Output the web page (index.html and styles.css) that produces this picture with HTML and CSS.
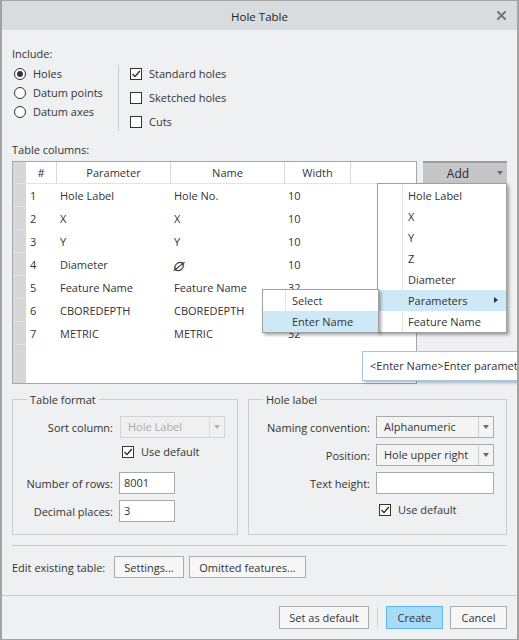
FILE: index.html
```html
<!DOCTYPE html>
<html>
<head>
<meta charset="utf-8">
<title>Hole Table</title>
<link rel="stylesheet" href="styles.css">
</head>
<body>
<div class="window">
  <div class="titlebar">
    <span class="title">Hole Table</span>
    <svg class="close" width="9" height="9" viewBox="0 0 9 9"><path d="M1 1L8 8M8 1L1 8" stroke="#767676" stroke-width="2" stroke-linecap="square"/></svg>
  </div>
  <div class="content">
    <div class="section-label include-label">Include:</div>
    <div class="include">
      <div class="radios">
        <div class="opt radio-row"><span class="radio checked"></span>Holes</div>
        <div class="opt radio-row"><span class="radio"></span>Datum points</div>
        <div class="opt radio-row"><span class="radio"></span>Datum axes</div>
      </div>
      <div class="vsep"></div>
      <div class="checks">
        <div class="opt check-row"><span class="check"><svg width="10" height="10" viewBox="0 0 10 10"><path d="M1.5 5L4 7.6L8.8 2" fill="none" stroke="#222" stroke-width="1.3"/></svg></span>Standard holes</div>
        <div class="opt check-row"><span class="check"></span>Sketched holes</div>
        <div class="opt check-row"><span class="check"></span>Cuts</div>
      </div>
    </div>
    <div class="section-label cols-label">Table columns:</div>
    <div class="table-area">
      <div class="table">
        <div class="trow thead">
          <div class="gutter"></div><div class="cell hc">#</div><div class="cell hc">Parameter</div><div class="cell hc">Name</div><div class="cell hc">Width</div><div class="cell hc last"></div>
        </div>
        <div class="trow"><div class="gutter"></div><div class="cell num">1</div><div class="cell">Hole Label</div><div class="cell">Hole No.</div><div class="cell">10</div><div class="cell"></div></div>
        <div class="trow"><div class="gutter"></div><div class="cell num">2</div><div class="cell">X</div><div class="cell">X</div><div class="cell">10</div><div class="cell"></div></div>
        <div class="trow"><div class="gutter"></div><div class="cell num">3</div><div class="cell">Y</div><div class="cell">Y</div><div class="cell">10</div><div class="cell"></div></div>
        <div class="trow"><div class="gutter"></div><div class="cell num">4</div><div class="cell">Diameter</div><div class="cell"><span class="dia">⌀</span></div><div class="cell">10</div><div class="cell"></div></div>
        <div class="trow"><div class="gutter"></div><div class="cell num">5</div><div class="cell">Feature Name</div><div class="cell">Feature Name</div><div class="cell">32</div><div class="cell"></div></div>
        <div class="trow"><div class="gutter"></div><div class="cell num">6</div><div class="cell">CBOREDEPTH</div><div class="cell">CBOREDEPTH</div><div class="cell">32</div><div class="cell"></div></div>
        <div class="trow"><div class="gutter"></div><div class="cell num">7</div><div class="cell">METRIC</div><div class="cell">METRIC</div><div class="cell">32</div><div class="cell"></div></div>
        <div class="filler"><div class="gutter"></div></div>
      </div>
      <div class="add-btn"><span class="add-text">Add</span><span class="add-caret"><span class="caret"></span></span></div>

      <div class="menu main-menu">
        <div class="mi">Hole Label</div>
        <div class="mi">X</div>
        <div class="mi">Y</div>
        <div class="mi">Z</div>
        <div class="mi">Diameter</div>
        <div class="mi hl">Parameters<span class="sub-arrow"></span></div>
        <div class="mi">Feature Name</div>
      </div>
      <div class="menu sub-menu">
        <div class="mi">Select</div>
        <div class="mi hl">Enter Name</div>
      </div>
      <div class="tooltip">&lt;Enter Name&gt;Enter parameter name</div>
    </div>

    <div class="groups">
      <div class="group tf">
        <div class="group-title">Table format</div>
        <div class="frow h22">
          <span class="flabel">Sort column:</span>
          <div class="combo disabled tf-combo"><span class="combo-text">Hole Label</span><span class="combo-btn"><span class="caret"></span></span></div>
        </div>
        <div class="frow h28">
          <span class="flabel"></span>
          <div class="opt ctl-check"><span class="check"><svg width="10" height="10" viewBox="0 0 10 10"><path d="M1.5 5L4 7.6L8.8 2" fill="none" stroke="#222" stroke-width="1.3"/></svg></span>Use default</div>
        </div>
        <div class="frow h22 mt6">
          <span class="flabel">Number of rows:</span>
          <div class="input tf-input">8001</div>
        </div>
        <div class="frow h22 mt6">
          <span class="flabel">Decimal places:</span>
          <div class="input tf-input">3</div>
        </div>
      </div>
      <div class="group hlg">
        <div class="group-title">Hole label</div>
        <div class="frow h22">
          <span class="flabel">Naming convention:</span>
          <div class="combo hl-ctl"><span class="combo-text">Alphanumeric</span><span class="combo-btn"><span class="caret"></span></span></div>
        </div>
        <div class="frow h22 mt6">
          <span class="flabel">Position:</span>
          <div class="combo hl-ctl"><span class="combo-text">Hole upper right</span><span class="combo-btn"><span class="caret"></span></span></div>
        </div>
        <div class="frow h22 mt6">
          <span class="flabel">Text height:</span>
          <div class="input hl-ctl"></div>
        </div>
        <div class="frow h32">
          <span class="flabel"></span>
          <div class="opt ctl-check"><span class="check"><svg width="10" height="10" viewBox="0 0 10 10"><path d="M1.5 5L4 7.6L8.8 2" fill="none" stroke="#222" stroke-width="1.3"/></svg></span>Use default</div>
        </div>
      </div>
    </div>

    <div class="hsep"></div>
    <div class="edit-row">
      <span class="edit-label">Edit existing table:</span>
      <button class="btn w-settings">Settings...</button>
      <button class="btn w-omitted">Omitted features...</button>
    </div>
  </div>
  <div class="footer">
    <button class="btn fbtn w-default">Set as default</button>
    <span class="fsep"></span>
    <button class="btn fbtn primary w-small">Create</button>
    <button class="btn fbtn w-small">Cancel</button>
  </div>
</div>
</body>
</html>
```

FILE: styles.css
```css
* { box-sizing: border-box; }
html, body { margin: 0; padding: 0; overflow: hidden; }
body {
  width: 519px;
  height: 640px;
  font-family: "Open Sans", "Noto Sans", sans-serif;
  font-size: 11px;
  color: #333;
}
.window {
  width: 519px;
  height: 640px;
  border: 1px solid #a3a3a3;
  border-left-width: 2px;
  border-right-width: 2px;
  background: #eff0f1;
  display: flex;
  flex-direction: column;
  overflow: hidden;
}
.titlebar {
  height: 29px;
  flex: none;
  background: #d9dcde;
  display: grid;
  grid-template-columns: 1fr auto 1fr;
  align-items: center;
}
.title { grid-column: 2; font-size: 11.5px; color: #1e1e1e; padding-top: 1px; }
.close { grid-column: 3; justify-self: end; margin-right: 11px; }

.content { padding: 0 10px; position: relative; }
.section-label { line-height: 16px; }
.include-label { margin-top: 16px; }
.cols-label { margin-top: 8px; }

.include { display: flex; align-items: flex-start; }
.radios { width: 106px; padding-top: 2px; }
.opt { display: flex; align-items: center; line-height: 16px; white-space: nowrap; }
.radio-row { height: 19px; padding-left: 2px; }
.radio {
  width: 12px; height: 12px; flex: none;
  border: 1px solid #333; border-radius: 50%;
  background: #fff; margin-right: 7px;
  display: flex; align-items: center; justify-content: center;
}
.radio.checked::after { content: ""; width: 6px; height: 6px; border-radius: 50%; background: #333; }
.vsep { width: 1px; height: 66px; margin-top: 3px; background: #cacaca; flex: none; }
.checks { padding-left: 11px; }
.check-row { height: 24px; }
.check {
  width: 12px; height: 12px; flex: none;
  border: 1px solid #333; background: #fff; margin-right: 7px;
  display: flex; align-items: center; justify-content: center;
}

/* table */
.table-area { position: relative; display: flex; align-items: flex-start; margin-top: 3px; }
.table {
  width: 405px; height: 223px; flex: none;
  border: 1px solid #a7a7a7; background: #fff;
  display: flex; flex-direction: column;
}
.trow {
  display: grid;
  grid-template-columns: 13px 31px 114px 114px 66px 1fr;
  height: 23px; flex: none;
}
.thead { height: 22px; }
.gutter { background: #d7d7d7; border-bottom: 1px solid #e3e3e3; }
.cell { line-height: 23px; padding-left: 3px; white-space: nowrap; overflow: hidden; }
.cell.num { padding-left: 4px; }
.hc {
  line-height: 21px; text-align: center; padding-left: 0;
  border-right: 1px solid #dadada; border-bottom: 1px solid #e3e3e3;
}
.hc.last { border-right: none; }
.dia {
  display: inline-block;
  font-family: "DejaVu Sans", sans-serif;
  font-size: 18px;
  line-height: 18px;
  vertical-align: -2px;
  transform: skewX(-14deg);
  color: #3a3a3a;
}
.filler { flex: 1; display: grid; grid-template-columns: 13px 1fr; }
.filler .gutter { border-bottom: none; }

.add-btn {
  margin-left: 6px; width: 84px; height: 22px; flex: none;
  background: #c6c6c9; border-top: 2px solid #9d9d9f;
  display: flex; align-items: center;
}
.add-text { width: 70px; text-align: center; font-size: 12px; color: #2a2a2a; }
.add-caret { width: 14px; display: flex; justify-content: center; }
.caret {
  width: 0; height: 0;
  border-left: 3.5px solid transparent; border-right: 3.5px solid transparent;
  border-top: 4px solid #6a6a6a;
}

.menu {
  position: absolute;
  background-color: #fff;
  border: 1px solid #a0a0a0;
  box-shadow: 2px 2px 3px rgba(0, 0, 0, 0.35);
}
.main-menu {
  left: 365px; top: 22px; width: 130px; padding-top: 1px;
  background-image: linear-gradient(to right, transparent 24px, #e4e4e4 24px, #e4e4e4 25px, transparent 25px);
  z-index: 1;
}
.sub-menu {
  left: 250px; top: 128px; width: 117px;
  background-image: linear-gradient(to right, transparent 22px, #e4e4e4 22px, #e4e4e4 23px, transparent 23px);
  z-index: 2;
}
.mi { height: 21px; line-height: 21px; padding-left: 30px; position: relative; white-space: nowrap; }
.sub-menu .mi { padding-left: 29px; }
.mi.hl { background: #cde9f7; }
.sub-arrow {
  position: absolute; right: 8px; top: 7px;
  width: 0; height: 0;
  border-top: 3.5px solid transparent; border-bottom: 3.5px solid transparent;
  border-left: 4px solid #333;
}
.tooltip {
  position: absolute; left: 350px; top: 190px;
  width: 200px; height: 30px;
  border: 1px solid #a3c6df; background: #fff;
  padding-left: 7px; line-height: 28px; white-space: nowrap;
  box-shadow: 2px 2px 3px rgba(0, 0, 0, 0.25);
  z-index: 3;
}

/* groups */
.groups { display: flex; gap: 10px; margin-top: 15px; }
.group { border: 1px solid #cdcdcd; }
.tf { width: 226px; padding-bottom: 12px; }
.hlg { flex: 1; padding-bottom: 8px; }
.group-title {
  width: max-content; margin: -8px 0 8px 14px; padding: 0 3px;
  background: #eff0f1; line-height: 16px;
}
.frow { display: flex; align-items: center; }
.h22 { height: 22px; }
.h28 { height: 28px; }
.h32 { height: 32px; }
.mt6 { margin-top: 6px; }
.flabel { width: 100px; margin-right: 6px; text-align: right; white-space: nowrap; flex: none; }
.hlg .flabel { width: 121px; }
.ctl-check { margin-left: 3px; }

.combo {
  height: 22px; display: flex; align-items: stretch;
  border: 1px solid #acacac; background: #f4f4f4;
}
.combo-text { flex: 1; padding-left: 7px; line-height: 20px; white-space: nowrap; overflow: hidden; }
.combo-btn { width: 15px; border-left: 1px solid #cfcfcf; display: flex; align-items: center; justify-content: center; }
.combo.disabled { border-color: #d3d3d3; background: #f0f0f0; color: #a8a8a8; }
.combo.disabled .combo-btn { border-left-color: #dcdcdc; }
.combo.disabled .caret { border-top-color: #b3b3b3; }
.tf-combo { width: 105px; margin-left: 1px; }
.hl-ctl { width: 118px; }
.input {
  height: 22px; border: 1px solid #aaaaaa; background: #fff;
  padding-left: 4px; line-height: 20px;
}
.tf-input { width: 56px; }

.hsep { height: 1px; background: #c9c9c9; margin-top: 10px; }
.edit-row { display: flex; align-items: center; margin-top: 10px; gap: 5px; }
.edit-label { width: 97px; white-space: nowrap; }

.btn {
  font-family: inherit; font-size: 11px; color: #333;
  height: 22px; padding: 0; margin: 0;
  border: 1px solid #adadad; background: #f6f6f6;
  white-space: nowrap;
}
.w-settings { width: 70px; }
.w-omitted { width: 117px; }

.footer {
  margin-top: auto; flex: none;
  border-top: 1px solid #c9c9c9;
  padding: 10px 10px 10px 0;
  display: flex; justify-content: flex-end; align-items: center;
}
.fbtn { height: 23px; }
.w-default { width: 90px; }
.w-small { width: 57px; margin-left: 7px; }
.fsep { width: 1px; height: 21px; background: #d2d2d2; margin: 0 1px 0 8px; }
.primary { background: #a7dcf9; border-color: #62b5e7; }
```
